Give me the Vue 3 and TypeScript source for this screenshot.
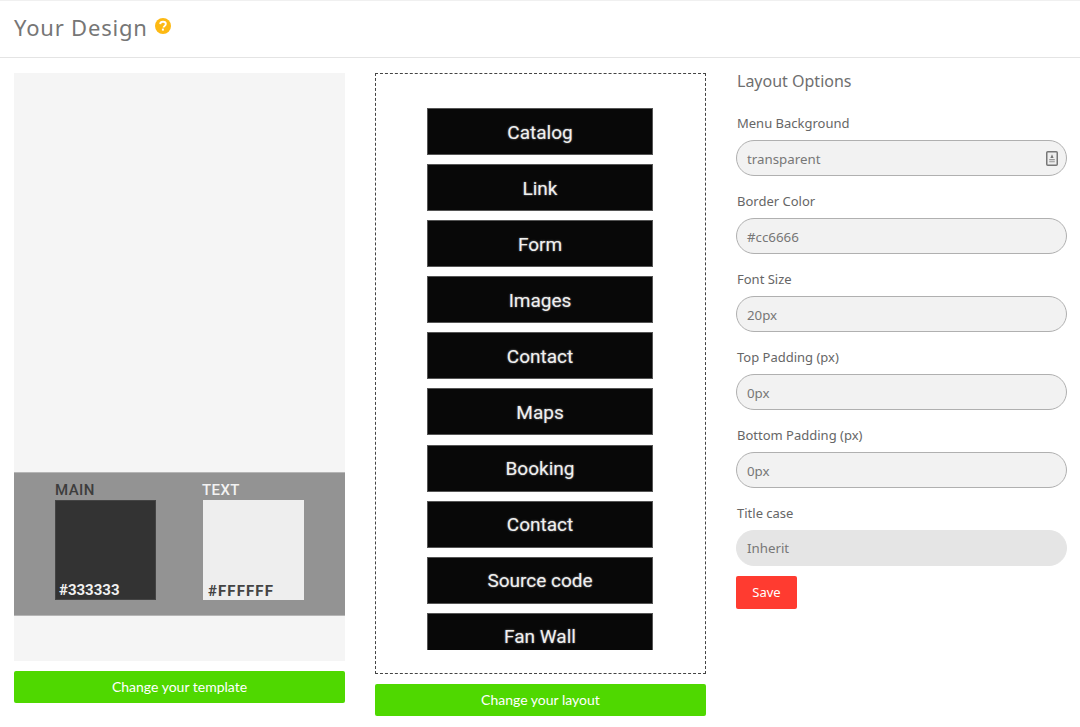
<script setup lang="ts">
const menu: string[] = ['Catalog', 'Link', 'Form', 'Images', 'Contact', 'Maps', 'Booking', 'Contact', 'Source code', 'Fan Wall']
const fields: { label: string; value: string; icon?: boolean }[] = [
  { label: 'Menu Background', value: 'transparent', icon: true },
  { label: 'Border Color', value: '#cc6666' },
  { label: 'Font Size', value: '20px' },
  { label: 'Top Padding (px)', value: '0px' },
  { label: 'Bottom Padding (px)', value: '0px' },
]
</script>

<template>
  <div class="page">
    <header class="head">
      <h1 class="title">Your Design</h1>
      <svg class="help" viewBox="0 0 16 16" width="16" height="16">
        <circle cx="8" cy="8" r="8" fill="#fdb913" />
        <path d="M5.2 6.1C5.3 4.6 6.5 3.8 8 3.8c1.6 0 2.8.9 2.8 2.3 0 1.1-.6 1.6-1.4 2.1-.6.4-.8.6-.8 1.2" fill="none" stroke="#fff" stroke-width="1.9" />
        <rect x="6.9" y="10.6" width="2" height="2" fill="#fff" />
      </svg>
    </header>
    <main class="cols">
      <section class="col">
        <div class="template">
          <div class="band">
            <div class="swatch-col">
              <span class="sw-label dark">MAIN</span>
              <div class="swatch main-sw"><span>#333333</span></div>
            </div>
            <div class="swatch-col">
              <span class="sw-label light">TEXT</span>
              <div class="swatch text-sw"><span>#FFFFFF</span></div>
            </div>
          </div>
        </div>
        <button class="green">Change your template</button>
      </section>
      <section class="col">
        <div class="layout">
          <div class="menu">
            <div v-for="(m, i) in menu" :key="i" class="item"><span>{{ m }}</span></div>
          </div>
        </div>
        <button class="green">Change your layout</button>
      </section>
      <section class="col options">
        <h2 class="opt-title">Layout Options</h2>
        <div v-for="f in fields" :key="f.label" class="field">
          <label>{{ f.label }}</label>
          <div class="input">
            <span>{{ f.value }}</span>
            <svg v-if="f.icon" class="key" viewBox="0 0 12 15" width="12" height="15">
              <rect x="0.75" y="0.75" width="10.5" height="13.5" rx="1" fill="#eee" stroke="#777" stroke-width="1.5" />
              <path d="M6 3.2 7.6 7H4.4Z" fill="#777" />
              <rect x="3.2" y="8" width="5.6" height="1.3" fill="#999" />
              <rect x="3.2" y="10" width="5.6" height="1.3" fill="#aaa" />
            </svg>
          </div>
        </div>
        <div class="field">
          <label>Title case</label>
          <div class="input select"><span>Inherit</span></div>
        </div>
        <button class="save">Save</button>
      </section>
    </main>
  </div>
</template>

<style>
html, body { margin: 0; background: #fff; }
</style>

<style scoped>
.page {
  height: 727px;
  overflow: hidden;
  box-sizing: border-box;
  border-top: 1px solid #f0f0f0;
  font-family: "Noto Sans", sans-serif;
  color: #6f6f6f;
}
.head {
  height: 57px;
  box-sizing: border-box;
  border-bottom: 1px solid #e4e4e4;
  padding: 0 14px 5px;
  display: flex;
  align-items: center;
  gap: 7px;
}
.title {
  margin: 0;
  font-size: 22px;
  font-weight: 400;
  letter-spacing: 0.8px;
  color: #767676;
  line-height: 30px;
}
.help { margin-top: -1px; }
.cols {
  display: grid;
  grid-template-columns: 331px 331px 331px;
  gap: 30px;
  padding: 15px 14px 0;
}
.col { display: flex; flex-direction: column; gap: 10px; }
.template {
  height: 588px;
  background: #f5f5f5;
  display: flex;
  flex-direction: column;
  padding-top: 399px;
  box-sizing: border-box;
}
.band {
  height: 144px;
  box-sizing: border-box;
  background: #939393;
  border-top: 1px solid #b5b5b5;
  border-bottom: 1px solid #b5b5b5;
  display: flex;
  padding: 8px 0 0 41px;
  gap: 47px;
}
.swatch-col { display: flex; flex-direction: column; width: 101px; }
.sw-label {
  font-family: "Roboto", sans-serif;
  font-weight: 500;
  font-size: 15px;
  line-height: 18px;
  letter-spacing: 0.4px;
  margin-bottom: 1px;
}
.sw-label.dark { color: #3d3d3d; }
.sw-label.light { color: #f2f2f2; margin-left: -1px; }
.swatch {
  height: 100px;
  box-sizing: border-box;
  display: flex;
  align-items: flex-end;
  font-family: "Roboto", sans-serif;
  font-weight: 700;
  font-size: 15px;
  line-height: 18px;
}
.main-sw { background: #333; color: #f0f0f0; border: 1px solid #444; padding-left: 3px; letter-spacing: 0; }
.text-sw { background: #eee; color: #444; padding-left: 5px; letter-spacing: 1.1px; }
.green {
  height: 32px;
  border: 0;
  padding: 0 0 2px;
  border-radius: 2px;
  background: #4fd800;
  color: #fff;
  font-family: "Lato", sans-serif;
  font-size: 14px;
  width: 100%;
}
.layout {
  height: 601px;
  box-sizing: border-box;
  border: 1px dashed #444;
  padding: 34px 0 0 51px;
  background: #fff;
}
.menu {
  width: 226px;
  height: 542px;
  overflow: hidden;
  display: flex;
  flex-direction: column;
  gap: 9.1px;
}
.item {
  flex: 0 0 47px;
  box-sizing: border-box;
  background: #080808;
  border: 1px solid #555;
  color: #f0f0f0;
  font-family: "Roboto", sans-serif;
  font-weight: 400;
  font-size: 19px;
  display: flex;
  align-items: center;
  justify-content: center;
  padding-top: 1px;
  text-shadow: 0 0 2px rgba(240, 240, 240, 0.6);
}
.options { gap: 0; }
.opt-title {
  margin: -1px 0 0;
  font-size: 16px;
  font-weight: 400;
  line-height: 18px;
  color: #6f6f6f;
  padding: 0 0 10px 1px;
}
.field { display: flex; flex-direction: column; padding-top: 15px; height: 78px; box-sizing: border-box; }
.field label {
  font-size: 13px;
  line-height: 16px;
  color: #666;
  padding: 0 0 9px 1px;
  font-weight: 400;
}
.input {
  height: 36px;
  flex: none;
  box-sizing: border-box;
  border: 1px solid #b0b0b0;
  border-radius: 18px;
  background: #f2f2f2;
  display: flex;
  align-items: center;
  justify-content: space-between;
  padding: 1px 8px 0 10px;
  font-size: 13.3px;
  color: #777;
}
.select { background: #e5e5e5; border-color: #e5e5e5; padding-top: 0; }
.save {
  margin-top: 8px;
  width: 61px;
  height: 33px;
  border: 0;
  border-radius: 2px;
  padding: 0 0 1px;
  background: #ff3b30;
  color: #fff;
  font-family: "Noto Sans", sans-serif;
  font-size: 13px;
}
</style>
